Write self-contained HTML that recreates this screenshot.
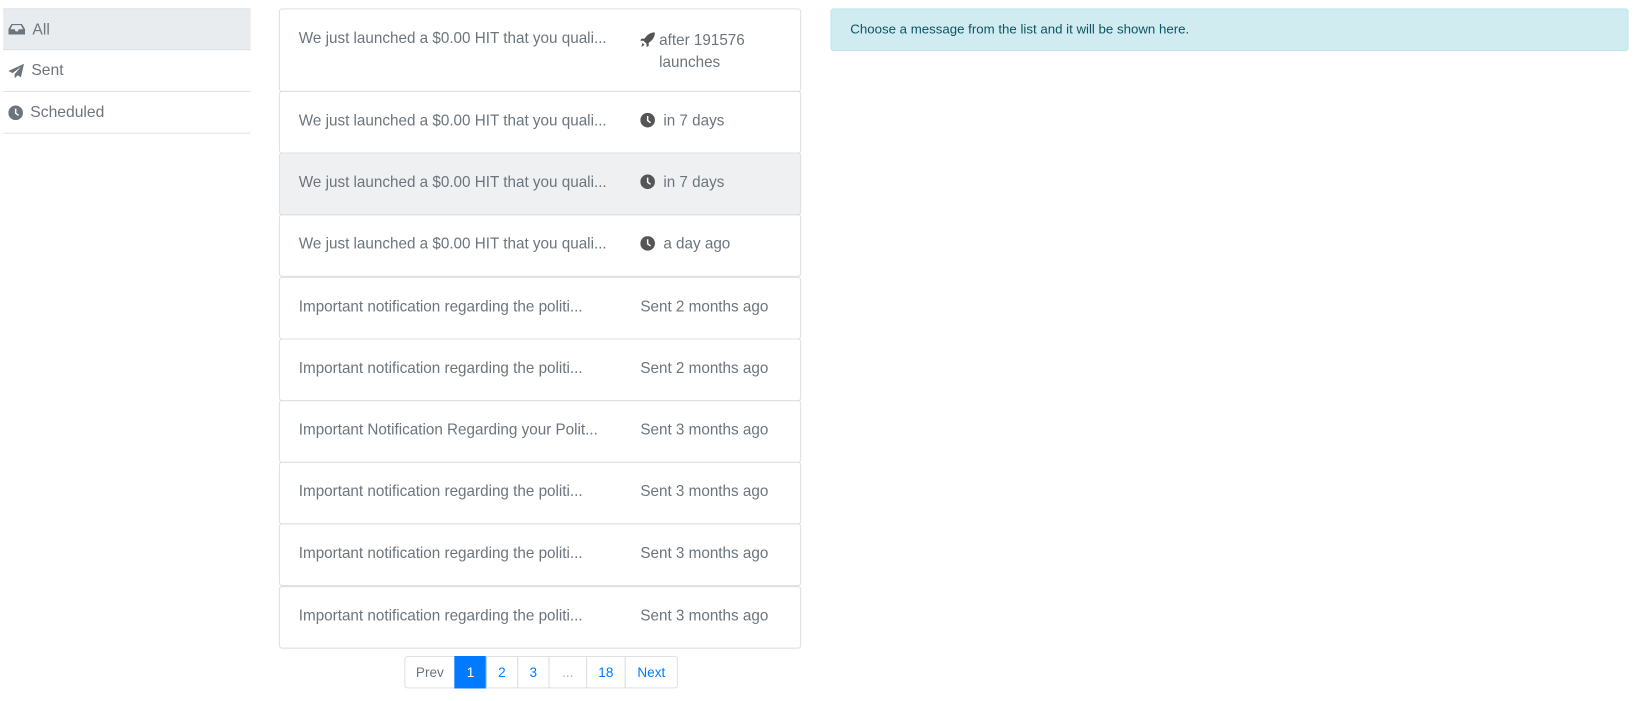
<!DOCTYPE html><html><head><style>
body{margin:0;width:1638px;height:701px;background:#fff;font-family:"Liberation Sans",sans-serif;position:relative;overflow:hidden}
#w{position:absolute;left:0;top:0;width:1568px;height:671px;transform:scale(1.0446);transform-origin:0 0}
.side{position:absolute;left:3px;top:8px;width:237px}
.side div{border-bottom:1px solid #dee2e6;color:#6c757d;font-size:15px;display:flex;align-items:center;padding-left:5px;box-sizing:border-box;height:40px}
.side div.act{background:#e9ecef;border-top:1px solid #dee2e6}
.side svg{margin-right:7px;fill:#6c757d}
.row{position:absolute;left:267px;width:500px;border:1px solid #e0e0e0;box-sizing:border-box;color:#6c757d;font-size:14.6px;border-radius:3px}
.row .l{position:absolute;left:18px}
.row .r{position:absolute;left:345px}
.row svg{fill:#555;vertical-align:-2px;margin-right:8px}
.alert{position:absolute;left:795px;top:8px;width:764px;height:41px;box-sizing:border-box;background:#d1ecf1;border:1px solid #bee5eb;border-radius:3px;color:#0c5460;font-size:12.7px;padding:12px 18px}
.pg{position:absolute;top:628px;left:387px;display:flex;height:31px;font-size:13px}
.pg span{border:1px solid #dee2e6;margin-left:-1px;display:flex;align-items:center;justify-content:center;color:#007bff;box-sizing:border-box}
</style></head><body><div id="w">
<div class="side">
<div class="act"><svg width="16" height="12" viewBox="0 0 16 12"><path d="M3 1h10l3 5v5H0V6z M2 6h4l1 2h2l1-2h4l-2-4H4z"/></svg>All</div>
<div><svg width="15" height="14" viewBox="0 0 15 14"><path d="M15 0L0 7l4 2 8-6-6 7v4l3-3 3 2z"/></svg>Sent</div>
<div><svg width="14" height="14" viewBox="0 0 14 14"><circle cx="7" cy="7" r="7"/><path d="M6.3 3h1.4v4l2.5 2-.8 1L6.3 7.7z" fill="#fff"/></svg>Scheduled</div>
</div>
<div class="row" style="top:8px;height:80px"><span class="l" style="top:20px">We just launched a $0.00 HIT that you quali...</span><span class="r" style="top:20px;line-height:21px"><svg width="14" height="14" viewBox="0 0 14 14" style="margin-right:4px"><path d="M14 0C9 0 6 3 4 6H1L0 8h3l3 3v3l2-1V10c3-2 6-5 6-10z M2 10l2 2-3 2z"/></svg>after 191576<br><span style="padding-left:18px">launches</span></span></div>
<div id="rows"></div>
<script>
var d=[["We just launched a $0.00 HIT that you quali...","in 7 days",1],["We just launched a $0.00 HIT that you quali...","in 7 days",1],["We just launched a $0.00 HIT that you quali...","a day ago",1],["Important notification regarding the politi...","Sent 2 months ago"],["Important notification regarding the politi...","Sent 2 months ago"],["Important Notification Regarding your Polit...","Sent 3 months ago"],["Important notification regarding the politi...","Sent 3 months ago"],["Important notification regarding the politi...","Sent 3 months ago"],["Important notification regarding the politi...","Sent 3 months ago"]];
var h="",t=87;
d.forEach(function(r,i){var ic=r[2]?'<svg width="14" height="14" viewBox="0 0 14 14"><circle cx="7" cy="7" r="7"/><path d="M6.3 3h1.4v4l2.5 2-.8 1L6.3 7.7z" fill="#fff"/></svg>':'';
h+='<div class="row" style="top:'+t+'px;height:60px;'+(i==1?'background:#eff0f2;':'')+'"><span class="l" style="top:20px">'+r[0]+'</span><span class="r" style="top:20px">'+ic+r[1]+'</span></div>';t+=59.2;});
document.getElementById("rows").innerHTML=h;
</script>
<div class="alert">Choose a message from the list and it will be shown here.</div>
<div class="pg"><span style="width:49px;color:#6c757d;border-radius:3px 0 0 3px;margin-left:0">Prev</span><span style="width:31px;background:#007bff;color:#fff;border-color:#007bff">1</span><span style="width:31px">2</span><span style="width:31px">3</span><span style="width:37px;color:#aaa">...</span><span style="width:38px">18</span><span style="width:51px;border-radius:0 3px 3px 0">Next</span></div>
</div></body></html>
